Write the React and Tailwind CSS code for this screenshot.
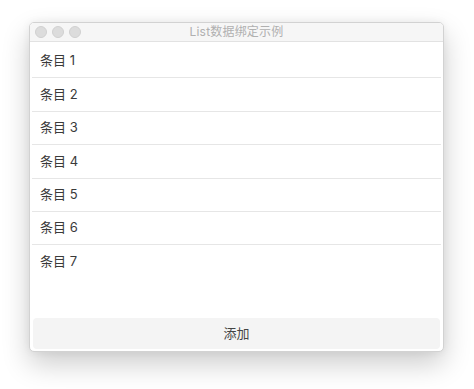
export default function App() {
  const items = [1, 2, 3, 4, 5, 6, 7];
  const font = { fontFamily: '"Helvetica Neue", Inter, "Noto Sans CJK SC", sans-serif' };
  return (
    <div className="w-[474px] h-[389px] bg-white pt-[22px] pl-[29px]" style={font}>
      <div className="w-[415px] h-[330px] flex flex-col rounded-[5px] border border-[#d2d2d2] bg-white shadow-[0_12px_28px_rgba(0,0,0,0.2),0_0_8px_rgba(0,0,0,0.06)] overflow-hidden">
        <div className="relative h-[19px] shrink-0 flex items-center bg-[#f6f6f6] border-b border-[#e2e2e2]">
          <div className="flex gap-[5px] pl-[5px]">
            <span className="w-[12px] h-[12px] rounded-full bg-[#dcdcdc] border border-[#d0d0d0]" />
            <span className="w-[12px] h-[12px] rounded-full bg-[#dcdcdc] border border-[#d0d0d0]" />
            <span className="w-[12px] h-[12px] rounded-full bg-[#dcdcdc] border border-[#d0d0d0]" />
          </div>
          <div className="absolute inset-0 flex items-center justify-center text-[12px] tracking-[0.2px] text-[#b0b0b0]">
            List数据绑定示例
          </div>
        </div>
        <div className="flex-1 flex flex-col px-[2px] pt-[3px]">
          {items.map((n, i) => (
            <div
              key={n}
              className={`h-[33.4px] shrink-0 flex items-center pl-[8px] text-[13px] text-[#3a3a3a] ${i < items.length - 1 ? 'border-b border-[#e6e6e6]' : ''}`}
            >
              条目 {n}
            </div>
          ))}
        </div>
        <div className="px-[3px] pb-[2px]">
          <div className="h-[31px] rounded-[4px] bg-[#f4f4f4] flex items-center justify-center text-[13px] text-[#444444]">
            添加
          </div>
        </div>
      </div>
    </div>
  );
}
